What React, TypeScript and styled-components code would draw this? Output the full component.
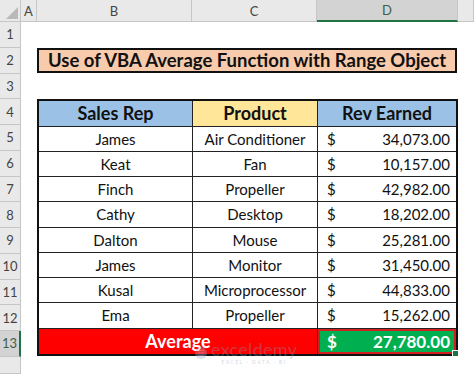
import React from "react";
import styled, { createGlobalStyle } from "styled-components";

const GlobalStyle = createGlobalStyle`
  html, body {
    margin: 0;
    padding: 0;
    background: #ffffff;
  }
  body {
    font-family: "Lato", "Liberation Sans", sans-serif;
  }
`;

const font = {
  cell: `"Lato", "Liberation Sans", sans-serif`,
};

const color = {
  header: "#e9e9e9",
  headerSelected: "#d3d3d3",
  headerLine: "#c6c6c6",
  headerText: "#444444",
  green: "#217346",
  peach: "#f8cbad",
  blue: "#9bc2e6",
  yellow: "#ffe699",
  red: "#ff0000",
  fillGreen: "#00b050",
};

interface Row {
  rep: string;
  product: string;
  rev: string;
}

const rows: Row[] = [
  { rep: "James", product: "Air Conditioner", rev: "34,073.00" },
  { rep: "Keat", product: "Fan", rev: "10,157.00" },
  { rep: "Finch", product: "Propeller", rev: "42,982.00" },
  { rep: "Cathy", product: "Desktop", rev: "18,202.00" },
  { rep: "Dalton", product: "Mouse", rev: "25,281.00" },
  { rep: "James", product: "Monitor", rev: "31,450.00" },
  { rep: "Kusal", product: "Microprocessor", rev: "44,833.00" },
  { rep: "Ema", product: "Propeller", rev: "15,262.00" },
];

const columns = ["A", "B", "C", "D"];

const Sheet = styled.div`
  position: relative;
  width: 474px;
  height: 374px;
  overflow: hidden;
  display: grid;
  grid-template-columns: 21px 16px 155px 125px 141px 1fr;
  grid-template-rows: 22px repeat(13, 25.75px) 1fr;
  background: #ffffff;
`;

const Corner = styled.div`
  grid-column: 1;
  grid-row: 1;
  position: relative;
  background: ${color.header};
  border-right: 1px solid ${color.headerLine};
  border-bottom: 1px solid ${color.headerLine};

  &::after {
    content: "";
    position: absolute;
    right: 2px;
    bottom: 2px;
    width: 0;
    height: 0;
    border-left: 12px solid transparent;
    border-bottom: 12px solid #b9b9b9;
  }
`;

const ColHeader = styled.div<{ $col: number; $selected?: boolean }>`
  grid-column: ${(p) => p.$col};
  grid-row: 1;
  display: flex;
  align-items: center;
  justify-content: center;
  font-family: ${font.cell};
  font-size: 13px;
  color: ${(p) => (p.$selected ? "#3d5e48" : color.headerText)};
  background: ${(p) => (p.$selected ? color.headerSelected : color.header)};
  border-right: 1px solid ${color.headerLine};
  border-bottom: ${(p) =>
    p.$selected ? `2px solid ${color.green}` : `1px solid ${color.headerLine}`};
`;

const RowHeader = styled.div<{ $row: number; $selected?: boolean }>`
  grid-column: 1;
  grid-row: ${(p) => p.$row};
  display: flex;
  align-items: center;
  justify-content: center;
  font-family: ${font.cell};
  font-size: 13px;
  color: ${(p) => (p.$selected ? "#3d5e48" : color.headerText)};
  background: ${(p) => (p.$selected ? color.headerSelected : color.header)};
  border-bottom: 1px solid ${color.headerLine};
  border-right: ${(p) =>
    p.$selected ? `2px solid ${color.green}` : `1px solid ${color.headerLine}`};
`;

const Title = styled.div`
  grid-column: 3 / 6;
  grid-row: 3;
  display: flex;
  align-items: center;
  justify-content: center;
  margin: 0 1px 1px 0;
  background: ${color.peach};
  border: 2px solid #111111;
  font-family: ${font.cell};
  font-weight: bold;
  font-size: 18.5px;
  color: #111111;
`;

const Table = styled.div`
  grid-column: 3 / 6;
  grid-row: 5 / 15;
  display: grid;
  grid-template-columns: 154px 125px 1fr;
  grid-template-rows: repeat(10, 1fr);
  border: 2px solid #111111;
  margin-bottom: 1px;
`;

const Cell = styled.div<{ $bg?: string; $bold?: boolean; $last?: boolean }>`
  display: flex;
  align-items: center;
  justify-content: center;
  background: ${(p) => p.$bg || "#ffffff"};
  border-right: ${(p) => (p.$last ? "none" : "1px solid #222222")};
  border-bottom: 1px solid #222222;
  font-family: ${font.cell};
  font-size: ${(p) => (p.$bold ? "18px" : "15px")};
  font-weight: ${(p) => (p.$bold ? "bold" : "normal")};
  color: #111111;
`;

const Money = styled.div`
  display: flex;
  align-items: center;
  justify-content: space-between;
  padding: 0 6px 0 9px;
  border-bottom: 1px solid #222222;
  font-family: ${font.cell};
  font-size: 15px;
  color: #111111;
`;

const AverageLabel = styled.div`
  grid-column: 1 / 3;
  display: flex;
  align-items: center;
  justify-content: center;
  background: ${color.red};
  border-right: 1px solid #222222;
  font-family: ${font.cell};
  font-size: 18px;
  font-weight: bold;
  color: #ffffff;
`;

const AverageValue = styled.div`
  position: relative;
  display: flex;
  align-items: center;
  justify-content: space-between;
  padding: 0 4px 0 7px;
  background: ${color.fillGreen};
  border: 2px solid #d22020;
  font-family: ${font.cell};
  font-size: 17px;
  font-weight: bold;
  color: #ffffff;

  &::after {
    content: "";
    position: absolute;
    right: -5px;
    bottom: -5px;
    width: 5px;
    height: 5px;
    background: ${color.green};
    border: 1px solid #ffffff;
  }
`;

const Watermark = styled.div`
  position: absolute;
  left: 194px;
  top: 341px;
  display: flex;
  align-items: center;
  gap: 3px;
  opacity: 0.35;
  pointer-events: none;
`;

const WatermarkText = styled.div`
  display: flex;
  flex-direction: column;
  align-items: center;
  gap: 3px;
  font-family: ${font.cell};
  color: #8a93b3;
  line-height: 1;
`;

const WatermarkName = styled.span`
  font-size: 18px;
  line-height: 16px;
  letter-spacing: 0.3px;
`;

const WatermarkTag = styled.span`
  font-size: 5px;
  line-height: 5px;
  letter-spacing: 1.5px;
`;

const Logo = () => (
  <svg width="14" height="14" viewBox="0 0 14 14">
    <circle cx="7" cy="7" r="6" fill="#9aa6cf" />
    <path d="M4 7h6M4 4.5h6M4 9.5h6" stroke="#ffffff" strokeWidth="1.2" />
  </svg>
);

export default function App() {
  return (
    <>
      <GlobalStyle />
      <Sheet>
        <Corner />
        {columns.map((c, i) => (
          <ColHeader key={c} $col={i + 2} $selected={c === "D"}>
            {c}
          </ColHeader>
        ))}
        <ColHeader $col={6} />
        {Array.from({ length: 14 }, (_, i) => (
          <RowHeader key={i} $row={i + 2} $selected={i + 1 === 13}>
            {i < 13 ? i + 1 : ""}
          </RowHeader>
        ))}

        <Title>Use of VBA Average Function with Range Object</Title>

        <Table>
          <Cell $bg={color.blue} $bold>Sales Rep</Cell>
          <Cell $bg={color.yellow} $bold>Product</Cell>
          <Cell $bg={color.blue} $bold $last>Rev Earned</Cell>
          {rows.map((r, i) => (
            <React.Fragment key={i}>
              <Cell>{r.rep}</Cell>
              <Cell>{r.product}</Cell>
              <Money>
                <span>$</span>
                <span>{r.rev}</span>
              </Money>
            </React.Fragment>
          ))}
          <AverageLabel>Average</AverageLabel>
          <AverageValue>
            <span>$</span>
            <span>27,780.00</span>
          </AverageValue>
        </Table>

        <Watermark>
          <Logo />
          <WatermarkText>
            <WatermarkName>exceldemy</WatermarkName>
            <WatermarkTag>EXCEL · DATA · BI</WatermarkTag>
          </WatermarkText>
        </Watermark>
      </Sheet>
    </>
  );
}
